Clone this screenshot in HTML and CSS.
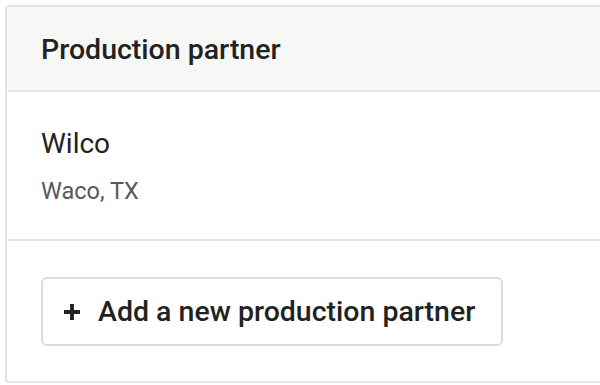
FILE: index.html
```html
<!DOCTYPE html>
<html>
<head>
<meta charset="utf-8">
<link rel="stylesheet" href="styles.css">
</head>
<body>
<section class="card">
  <header class="card-head"><h2 class="title">Production partner</h2></header>
  <div class="partner">
    <div class="name">Wilco</div>
    <div class="loc">Waco, TX</div>
  </div>
  <div class="card-foot">
    <button class="add-btn" type="button">
      <svg class="plus" viewBox="0 0 16 16" aria-hidden="true"><path d="M6.1 0h3.8v6.1H16v3.8H9.9V16H6.1V9.9H0V6.1h6.1z" fill="#222"/></svg>
      <span class="btn-label">Add a new production partner</span>
    </button>
  </div>
</section>
</body>
</html>
```

FILE: styles.css
```css
* { box-sizing: border-box; }
html, body { margin: 0; padding: 0; background: #fff; }
body {
  font-family: Roboto, "Liberation Sans", sans-serif;
  color: #222;
  overflow: hidden;
  padding: 5px 0 0 5px;
}
.card {
  width: 640px;
  border: 2px solid #e4e4e2;
  border-right: 0;
  border-radius: 4px 0 0 4px;
  background: #fff;
}
.card-head {
  height: 85px;
  background: #f7f7f5;
  border-bottom: 2px solid #e6e6e4;
  display: flex;
  align-items: center;
  padding: 2px 0 0 34px;
}
.title {
  margin: 0;
  font-size: 28.5px;
  line-height: 34px;
  font-weight: 500;
}
.partner {
  height: 149px;
  border-bottom: 2px solid #e4e4e2;
  padding: 35px 0 0 34px;
}
.name { font-size: 28px; line-height: 34px; }
.loc { font-size: 23.5px; line-height: 28px; color: #595959; margin-top: 16px; }
.card-foot { padding: 36px 0 35px 34px; }
.add-btn {
  display: flex;
  align-items: center;
  gap: 18px;
  height: 69px;
  width: 462px;
  padding: 0 0 0 21px;
  border: 2px solid #dcdcda;
  border-radius: 6px;
  background: #fff;
  font-family: inherit;
  font-size: 28.5px;
  font-weight: 500;
  color: #222;
}
.plus { width: 16px; height: 16px; flex: none; }
```
